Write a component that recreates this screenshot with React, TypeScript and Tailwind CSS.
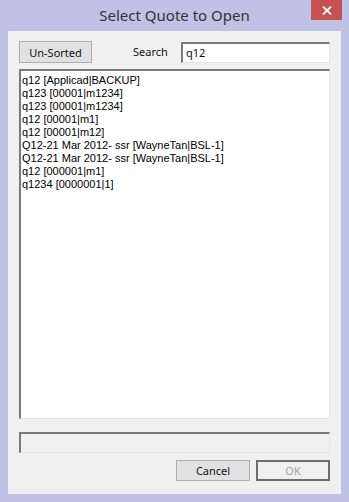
import React from "react";

const items = [
  "q12 [Applicad|BACKUP]",
  "q123 [00001|m1234]",
  "q123 [00001|m1234]",
  "q12 [00001|m1]",
  "q12 [00001|m12]",
  "Q12-21 Mar 2012- ssr [WayneTan|BSL-1]",
  "Q12-21 Mar 2012- ssr [WayneTan|BSL-1]",
  "q12 [000001|m1]",
  "q1234 [0000001|1]",
];

const App: React.FC = () => {
  return (
    <div className="w-[349px] h-[502px] bg-[#bfc2e4] flex flex-col overflow-hidden" style={{ fontFamily: "'Noto Sans', 'Open Sans', sans-serif" }}>
      <div className="h-[31px] flex items-start relative shrink-0">
        <div className="w-full text-center text-[15px] text-[#333] pt-[5px] leading-[20px]">Select Quote to Open</div>
        <div className="absolute right-[7px] top-0 w-[31px] h-[20px] bg-[#c75050] flex items-center justify-center">
          <svg width="10" height="9" viewBox="0 0 10 9">
            <path d="M1 0.5 L9 8.5 M9 0.5 L1 8.5" stroke="white" strokeWidth="1.8" />
          </svg>
        </div>
      </div>
      <div className="mx-[8px] mb-[8px] flex-1 bg-[#f0f0f0] flex flex-col px-[11px] pt-[10px] pb-[12px]">
        <div className="flex items-center h-[22px]">
          <button className="w-[73px] h-[22px] border border-[#adadad] bg-[#e1e1e1] text-[11px] text-[#111] leading-none">Un-Sorted</button>
          <span className="ml-[41px] text-[11px] text-[#111]">Search</span>
          <div className="ml-auto w-[149px] h-[21px] bg-white border-t-2 border-l-2 border-[#7a7a7a] border-r border-b border-r-[#e3e3e3] border-b-[#e3e3e3] text-[11px] pl-[3px] leading-[18px] text-[#111]">q12</div>
        </div>
        <div className="mt-[6px] h-[350px] bg-white border-t-2 border-l-2 border-[#7a7a7a] border-r border-b border-r-[#e3e3e3] border-b-[#e3e3e3] pt-[3px] pl-[1px]" style={{ fontFamily: "'Liberation Sans', Arial, sans-serif" }}>
          {items.map((t, i) => (
            <div key={i} className="text-[11px] leading-[13px] text-black whitespace-nowrap">{t}</div>
          ))}
        </div>
        <div className="mt-[13px] h-[21px] bg-[#f0f0f0] border-t-2 border-l-2 border-[#7a7a7a] border-r border-b border-r-[#e3e3e3] border-b-[#e3e3e3]" />
        <div className="mt-[7px] flex justify-end gap-[6px]">
          <button className="w-[74px] h-[21px] border border-[#adadad] bg-[#e1e1e1] text-[11px] text-[#111] leading-none">Cancel</button>
          <button className="w-[74px] h-[21px] border-2 border-[#6d6d6d] bg-[#f0f0f0] text-[11px] text-[#a0a0a0] leading-none">OK</button>
        </div>
      </div>
    </div>
  );
};

export default App;
